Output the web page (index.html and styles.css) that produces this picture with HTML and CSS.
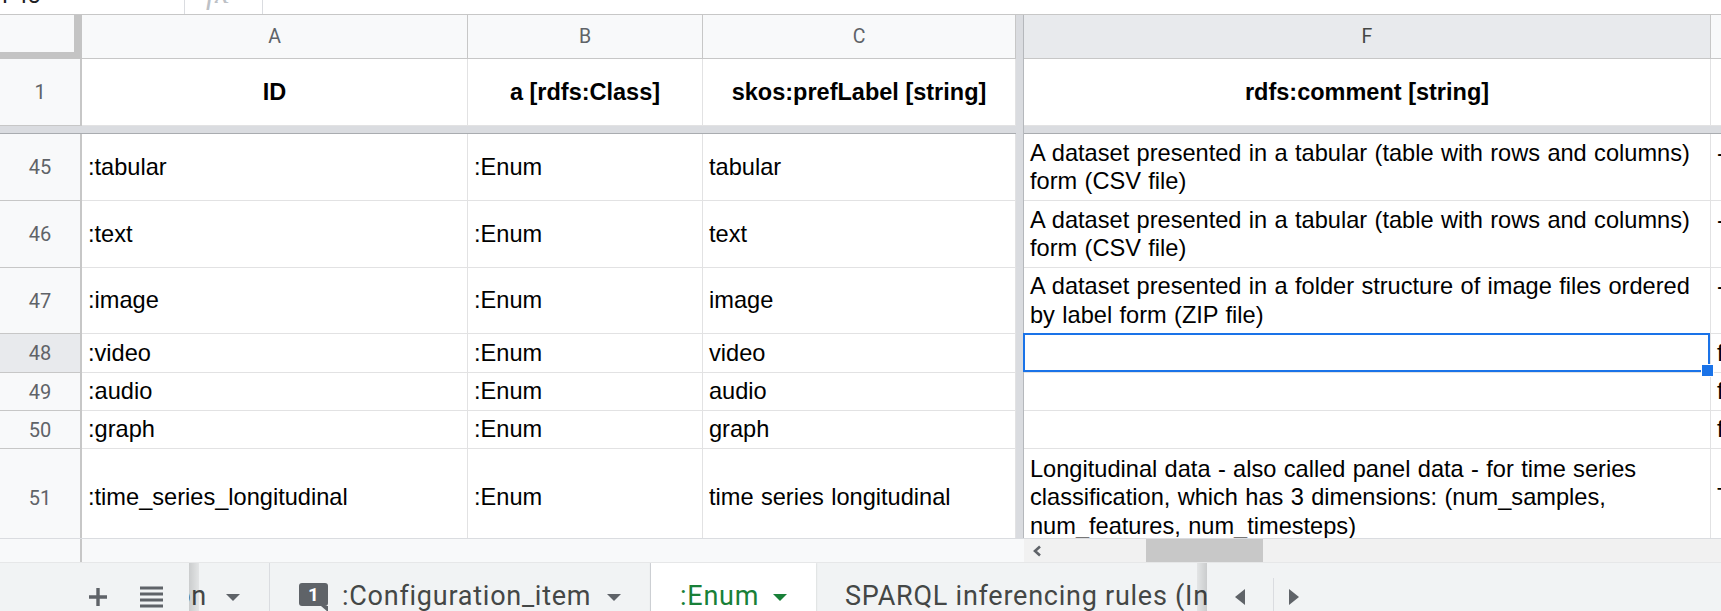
FILE: index.html
```html
<!DOCTYPE html>
<html>
<head>
<meta charset="utf-8">
<link rel="stylesheet" href="styles.css">
</head>
<body>
<div class="app">
  <div class="formula-bar">
    <div class="namebox"><span>F48</span></div>
    <div class="fx-sep"></div>
    <div class="fx"><span>fx</span></div>
    <div class="fx-sep"></div>
    <div class="formula-input"></div>
  </div>

  <div class="sheet">
    <div class="freeze-v"></div>
    <div class="freeze-h"></div>

    <div class="corner"></div>
    <div class="colhdr">A</div>
    <div class="colhdr">B</div>
    <div class="colhdr">C</div>
    <div class="colhdr sel">F</div>
    <div class="colhdr"></div>

    <div class="rowhdr">1</div>
    <div class="cell head"><span>ID</span></div>
    <div class="cell head"><span>a [rdfs:Class]</span></div>
    <div class="cell head"><span>skos:prefLabel [string]</span></div>
    <div class="cell head"><span>rdfs:comment [string]</span></div>
    <div class="cell"><span></span></div>

    <div class="rowhdr">45</div>
    <div class="cell"><span>:tabular</span></div>
    <div class="cell"><span>:Enum</span></div>
    <div class="cell"><span>tabular</span></div>
    <div class="cell wrap"><span>A dataset presented in a tabular (table with rows and columns) form (CSV file)</span></div>
    <div class="cell"><span>-<br>&nbsp;</span></div>

    <div class="rowhdr">46</div>
    <div class="cell"><span>:text</span></div>
    <div class="cell"><span>:Enum</span></div>
    <div class="cell"><span>text</span></div>
    <div class="cell wrap"><span>A dataset presented in a tabular (table with rows and columns) form (CSV file)</span></div>
    <div class="cell"><span>-<br>&nbsp;</span></div>

    <div class="rowhdr">47</div>
    <div class="cell"><span>:image</span></div>
    <div class="cell"><span>:Enum</span></div>
    <div class="cell"><span>image</span></div>
    <div class="cell wrap"><span>A dataset presented in a folder structure of image files ordered by label form (ZIP file)</span></div>
    <div class="cell"><span>-<br>&nbsp;</span></div>

    <div class="rowhdr sel">48</div>
    <div class="cell"><span>:video</span></div>
    <div class="cell"><span>:Enum</span></div>
    <div class="cell"><span>video</span></div>
    <div class="cell selected"><span></span></div>
    <div class="cell"><span>false</span></div>

    <div class="rowhdr">49</div>
    <div class="cell"><span>:audio</span></div>
    <div class="cell"><span>:Enum</span></div>
    <div class="cell"><span>audio</span></div>
    <div class="cell"><span></span></div>
    <div class="cell"><span>false</span></div>

    <div class="rowhdr">50</div>
    <div class="cell"><span>:graph</span></div>
    <div class="cell"><span>:Enum</span></div>
    <div class="cell"><span>graph</span></div>
    <div class="cell"><span></span></div>
    <div class="cell"><span>false</span></div>

    <div class="rowhdr">51</div>
    <div class="cell"><span>:time_series_longitudinal</span></div>
    <div class="cell"><span>:Enum</span></div>
    <div class="cell"><span>time series longitudinal</span></div>
    <div class="cell wrap"><span>Longitudinal data - also called panel data - for time series classification, which has 3 dimensions: (num_samples, num_features, num_timesteps)</span></div>
    <div class="cell"><span>True</span></div>
  </div>

  <div class="hscroll">
    <div class="hs-frozen"><div class="hs-rowhdr"></div></div>
    <div class="hs-track">
      <svg class="hs-chev" width="10" height="12" viewBox="0 0 10 12"><path d="M8 1.5 L3 6 L8 10.5" fill="none" stroke="#5f6368" stroke-width="2.6"/></svg>
      <div class="hs-thumb"></div>
    </div>
  </div>

  <div class="tabbar">
    <div class="tb-left">
      <svg class="ic-plus" width="20" height="20" viewBox="0 0 20 20"><path d="M10 1v18M1 10h18" stroke="#5f6368" stroke-width="3.4" fill="none"/></svg>
      <svg class="ic-menu" width="23" height="22" viewBox="0 0 23 22"><path d="M0 2h23M0 8h23M0 14h23M0 20h23" stroke="#5f6368" stroke-width="3.2" fill="none"/></svg>
    </div>
    <div class="tabs">
      <div class="tab first"><span class="tab-name">:Configuration</span><span class="caret"></span></div>
      <div class="tab second"><span class="badge">1</span><span class="tab-name">:Configuration_item</span><span class="caret"></span></div>
      <div class="tab active"><span class="tab-name">:Enum</span><span class="caret"></span></div>
      <div class="tab last"><span class="tab-name">SPARQL inferencing rules (Inferred)</span><span class="caret"></span></div>
    </div>
    <div class="tb-nav">
      <div class="nav-btn left"><svg width="10" height="16" viewBox="0 0 10 16"><path d="M10 0 L0 8 L10 16z" fill="#5f6368"/></svg></div>
      <div class="nav-div"></div>
      <div class="nav-btn right"><svg width="10" height="16" viewBox="0 0 10 16"><path d="M0 0 L10 8 L0 16z" fill="#5f6368"/></svg></div>
    </div>
  </div>
</div>
</body>
</html>
```
FILE: styles.css
```css
* { box-sizing: border-box; margin: 0; padding: 0; }
html, body { width: 1721px; height: 611px; overflow: hidden; background: #fff; }
body { font-family: "Liberation Sans", Arial, sans-serif; }

.app { display: flex; flex-direction: column; height: 611px; }

/* formula bar (cut off at top) */
.formula-bar {
  height: 15px; flex-shrink: 0; display: flex; overflow: hidden;
  border-bottom: 1px solid #c7c7c7; background: #fff;
}
.namebox { width: 184px; padding-left: 2px; font-family: Roboto, sans-serif; font-size: 23px; color: #202124; }
.namebox span { display: block; line-height: 28px; margin-top: -18px; }
.fx-sep { width: 1px; background: #dadce0; flex-shrink: 0; }
.fx { width: 77px; padding-left: 21px; }
.fx span { display: block; font-family: "Liberation Serif", serif; font-style: italic; font-size: 32px; line-height: 36px; margin-top: -26px; color: #bdc1c6; }
.formula-input { flex: 1; }

/* sheet grid */
.sheet {
  display: grid;
  grid-template-columns: 82px 386px 235px 313px 8px 687px 1fr;
  grid-template-rows: 44px 67px 8px 67px 67px 66px 39px 38px 38px 98px;
  height: 523px; flex-shrink: 0; overflow: hidden;
}
.freeze-v { grid-column: 5; grid-row: 1 / -1; background: #dadce0; border-right: 1px solid #b5b8bc; z-index: 1; }
.freeze-h { grid-column: 1 / -1; grid-row: 3; background: #dadce0; border-bottom: 1px solid #a9acb0; }

.corner { background: #f8f9fa; border-right: 8px solid #c4c4c4; border-bottom: 7px solid #c4c4c4; }
.colhdr {
  background: #f8f9fa; border-right: 1px solid #c7c7c7; border-bottom: 1px solid #c7c7c7;
  display: flex; align-items: center; justify-content: center;
  font-family: Roboto, sans-serif; font-size: 19.5px; color: #5f6368; overflow: hidden;
}
.colhdr.sel { background: #e8eaed; color: #444746; }

.rowhdr {
  background: #f8f9fa; border-right: 2px solid #c7c7c7; border-bottom: 1px solid #c7c7c7;
  display: flex; align-items: center; justify-content: center;
  font-family: Roboto, sans-serif; font-size: 20px; color: #5f6368;
}
.rowhdr.sel { background: #e8eaed; }

.cell {
  border-right: 1px solid #e2e2e3; border-bottom: 1px solid #e2e2e3;
  display: flex; align-items: center; padding: 0 6px;
  font-size: 23.6px; line-height: 28.5px; word-spacing: 0.8px; color: #000;
  white-space: nowrap; overflow: hidden; background: #fff;
}
.cell.wrap { white-space: normal; }
.cell.head { justify-content: center; font-weight: bold; word-spacing: 0; font-size: 23.5px; }
.cell.selected { position: relative; overflow: visible; }
.cell.selected::after {
  content: ""; position: absolute; left: -1px; top: -1px; right: 0; bottom: 0;
  border: 2px solid #1a73e8; z-index: 3;
}
.cell.selected::before {
  content: ""; position: absolute; right: -4px; bottom: -5px; width: 11px; height: 11px;
  background: #1a73e8; border: 1px solid #fff; z-index: 4;
}

/* horizontal scrollbar */
.hscroll { height: 24px; flex-shrink: 0; display: flex; border-top: 1px solid #dadce0; }
.hs-frozen { width: 1024px; background: #f8f9fa; }
.hs-rowhdr { width: 82px; height: 100%; border-right: 2px solid #c7c7c7; }
.hs-track { flex: 1; background: #f1f1f1; display: flex; align-items: center; padding-left: 8px; }
.hs-chev { flex-shrink: 0; }
.hs-thumb { margin-left: 104px; width: 117px; align-self: stretch; background: #c8c8c8; }

/* sheet tabs */
.tabbar {
  height: 49px; flex-shrink: 0; display: flex; overflow: hidden;
  background: #f1f3f4; border-top: 1px solid #e6e7e8;
}
.tb-left { width: 189px; flex-shrink: 0; display: flex; align-items: flex-start; padding-left: 88px; padding-top: 23px; }
.ic-plus { margin-top: 1px; }
.ic-menu { margin-left: 32px; }

.tabs { width: 1018px; flex-shrink: 0; display: flex; overflow: hidden; position: relative; }
.tabs::before, .tabs::after { content: ""; position: absolute; top: 0; bottom: 0; width: 10px; z-index: 2; }
.tabs::before { left: 0; background: linear-gradient(to right, rgba(0,0,0,0.16), rgba(0,0,0,0.06)); }
.tabs::after { right: 0; background: linear-gradient(to left, rgba(0,0,0,0.16), rgba(0,0,0,0.06)); }

.tab {
  flex-shrink: 0; display: flex; align-items: flex-start; padding: 18px 29px 0;
  border-right: 1px solid #dadce0; height: 60px;
  font-family: Roboto, sans-serif; font-size: 27px; line-height: 30px; letter-spacing: 0.75px;
  color: #444746; white-space: nowrap; overflow: hidden;
}
.tab-name { flex-shrink: 0; }
.caret {
  flex-shrink: 0; width: 0; height: 0; margin-top: 13px; margin-left: auto;
  border-left: 7px solid transparent; border-right: 7px solid transparent; border-top: 7px solid #5f6368;
}
.tab.first { width: 81px; justify-content: flex-end; }
.tab.first .caret { margin-left: 19px; }
.tab.second { width: 381px; }
.tab.active { width: 165px; background: #fff; color: #188038; border-right: none; box-shadow: 0 0 2px rgba(60,64,67,0.25); }
.tab.active .caret { border-top-color: #188038; }
.tab.last .caret { margin-left: 20px; }

.badge {
  flex-shrink: 0; position: relative; width: 29px; height: 23px; margin-top: 2px; margin-right: 14px;
  background: #5f6368; border-radius: 3px; color: #fff; text-align: center;
  font-size: 19px; line-height: 23px; font-weight: bold; letter-spacing: 0;
}
.badge::after {
  content: ""; position: absolute; right: 0; top: 23px; width: 0; height: 0;
  border-left: 7px solid transparent; border-top: 6px solid #5f6368;
}

.tb-nav { display: flex; flex-shrink: 0; }
.nav-btn { display: flex; justify-content: center; padding-top: 26px; }
.nav-btn.left { width: 66px; }
.nav-btn.right { width: 40px; }
.nav-div { width: 1px; background: #dadce0; margin-top: 15px; }
```
